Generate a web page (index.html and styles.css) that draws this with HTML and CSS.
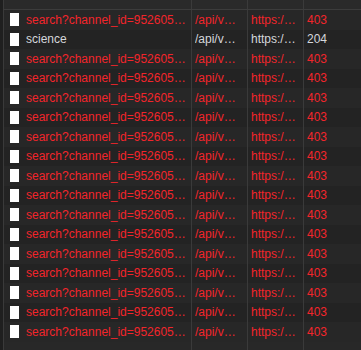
FILE: index.html
```html
<!DOCTYPE html>
<html>
<head>
<meta charset="utf-8">
<link rel="stylesheet" href="styles.css">
</head>
<body>
<div class="grid">
  <div class="head">
    <div class="c c1"></div><div class="c c2"></div><div class="c c3"></div><div class="c c4"></div>
  </div>
  <div class="rows">
    <div class="row err"><div class="c c1"><span class="ico"></span><span class="t">search?channel_id=952605…</span></div><div class="c c2"><span class="t">/api/v…</span></div><div class="c c3"><span class="t">https:/…</span></div><div class="c c4"><span class="t">403</span></div></div>
    <div class="row ok"><div class="c c1"><span class="ico"></span><span class="t">science</span></div><div class="c c2"><span class="t">/api/v…</span></div><div class="c c3"><span class="t">https:/…</span></div><div class="c c4"><span class="t">204</span></div></div>
    <div class="row err"><div class="c c1"><span class="ico"></span><span class="t">search?channel_id=952605…</span></div><div class="c c2"><span class="t">/api/v…</span></div><div class="c c3"><span class="t">https:/…</span></div><div class="c c4"><span class="t">403</span></div></div>
    <div class="row err"><div class="c c1"><span class="ico"></span><span class="t">search?channel_id=952605…</span></div><div class="c c2"><span class="t">/api/v…</span></div><div class="c c3"><span class="t">https:/…</span></div><div class="c c4"><span class="t">403</span></div></div>
    <div class="row err"><div class="c c1"><span class="ico"></span><span class="t">search?channel_id=952605…</span></div><div class="c c2"><span class="t">/api/v…</span></div><div class="c c3"><span class="t">https:/…</span></div><div class="c c4"><span class="t">403</span></div></div>
    <div class="row err"><div class="c c1"><span class="ico"></span><span class="t">search?channel_id=952605…</span></div><div class="c c2"><span class="t">/api/v…</span></div><div class="c c3"><span class="t">https:/…</span></div><div class="c c4"><span class="t">403</span></div></div>
    <div class="row err"><div class="c c1"><span class="ico"></span><span class="t">search?channel_id=952605…</span></div><div class="c c2"><span class="t">/api/v…</span></div><div class="c c3"><span class="t">https:/…</span></div><div class="c c4"><span class="t">403</span></div></div>
    <div class="row err"><div class="c c1"><span class="ico"></span><span class="t">search?channel_id=952605…</span></div><div class="c c2"><span class="t">/api/v…</span></div><div class="c c3"><span class="t">https:/…</span></div><div class="c c4"><span class="t">403</span></div></div>
    <div class="row err"><div class="c c1"><span class="ico"></span><span class="t">search?channel_id=952605…</span></div><div class="c c2"><span class="t">/api/v…</span></div><div class="c c3"><span class="t">https:/…</span></div><div class="c c4"><span class="t">403</span></div></div>
    <div class="row err"><div class="c c1"><span class="ico"></span><span class="t">search?channel_id=952605…</span></div><div class="c c2"><span class="t">/api/v…</span></div><div class="c c3"><span class="t">https:/…</span></div><div class="c c4"><span class="t">403</span></div></div>
    <div class="row err"><div class="c c1"><span class="ico"></span><span class="t">search?channel_id=952605…</span></div><div class="c c2"><span class="t">/api/v…</span></div><div class="c c3"><span class="t">https:/…</span></div><div class="c c4"><span class="t">403</span></div></div>
    <div class="row err"><div class="c c1"><span class="ico"></span><span class="t">search?channel_id=952605…</span></div><div class="c c2"><span class="t">/api/v…</span></div><div class="c c3"><span class="t">https:/…</span></div><div class="c c4"><span class="t">403</span></div></div>
    <div class="row err"><div class="c c1"><span class="ico"></span><span class="t">search?channel_id=952605…</span></div><div class="c c2"><span class="t">/api/v…</span></div><div class="c c3"><span class="t">https:/…</span></div><div class="c c4"><span class="t">403</span></div></div>
    <div class="row err"><div class="c c1"><span class="ico"></span><span class="t">search?channel_id=952605…</span></div><div class="c c2"><span class="t">/api/v…</span></div><div class="c c3"><span class="t">https:/…</span></div><div class="c c4"><span class="t">403</span></div></div>
    <div class="row err"><div class="c c1"><span class="ico"></span><span class="t">search?channel_id=952605…</span></div><div class="c c2"><span class="t">/api/v…</span></div><div class="c c3"><span class="t">https:/…</span></div><div class="c c4"><span class="t">403</span></div></div>
    <div class="row err"><div class="c c1"><span class="ico"></span><span class="t">search?channel_id=952605…</span></div><div class="c c2"><span class="t">/api/v…</span></div><div class="c c3"><span class="t">https:/…</span></div><div class="c c4"><span class="t">403</span></div></div>
    <div class="row err"><div class="c c1"><span class="ico"></span><span class="t">search?channel_id=952605…</span></div><div class="c c2"><span class="t">/api/v…</span></div><div class="c c3"><span class="t">https:/…</span></div><div class="c c4"><span class="t">403</span></div></div>
  </div>
  <div class="filler">
    <div class="c c1"></div><div class="c c2"></div><div class="c c3"></div><div class="c c4"></div>
  </div>
</div>
</body>
</html>
```
FILE: styles.css
```css
html, body {
  margin: 0;
  padding: 0;
  background: #282828;
  overflow: hidden;
}
.grid {
  width: 361px;
  height: 350px;
  display: flex;
  flex-direction: column;
  border-left: 3px solid #1f1f1f;
  box-sizing: border-box;
  font-family: "Liberation Sans", Arial, sans-serif;
  font-size: 12px;
}
.head, .row, .filler {
  display: grid;
  grid-template-columns: 188px 56px 56px 1fr;
}
.head {
  height: 9px;
  background: #2a2a2a;
  border-bottom: 1px solid #3c3c3c;
}
.rows {
  display: flex;
  flex-direction: column;
}
.row {
  height: 19.5px;
  background: #272727;
  color: #f2252b;
}
.row:nth-child(even) {
  background: #232323;
}
.row.ok {
  color: #d5d7db;
}
.filler {
  flex: 1;
  background: #282828;
}
.c {
  border-left: 1px solid #3a3a3a;
  display: flex;
  align-items: center;
  padding-left: 3px;
  overflow: hidden;
  white-space: nowrap;
  min-width: 0;
}
.c.c1 {
  padding-left: 6px;
}
.ico {
  flex: none;
  width: 9px;
  height: 13px;
  background: #ffffff;
  margin-right: 7px;
}
.t {
  overflow: hidden;
  text-overflow: ellipsis;
}
```
